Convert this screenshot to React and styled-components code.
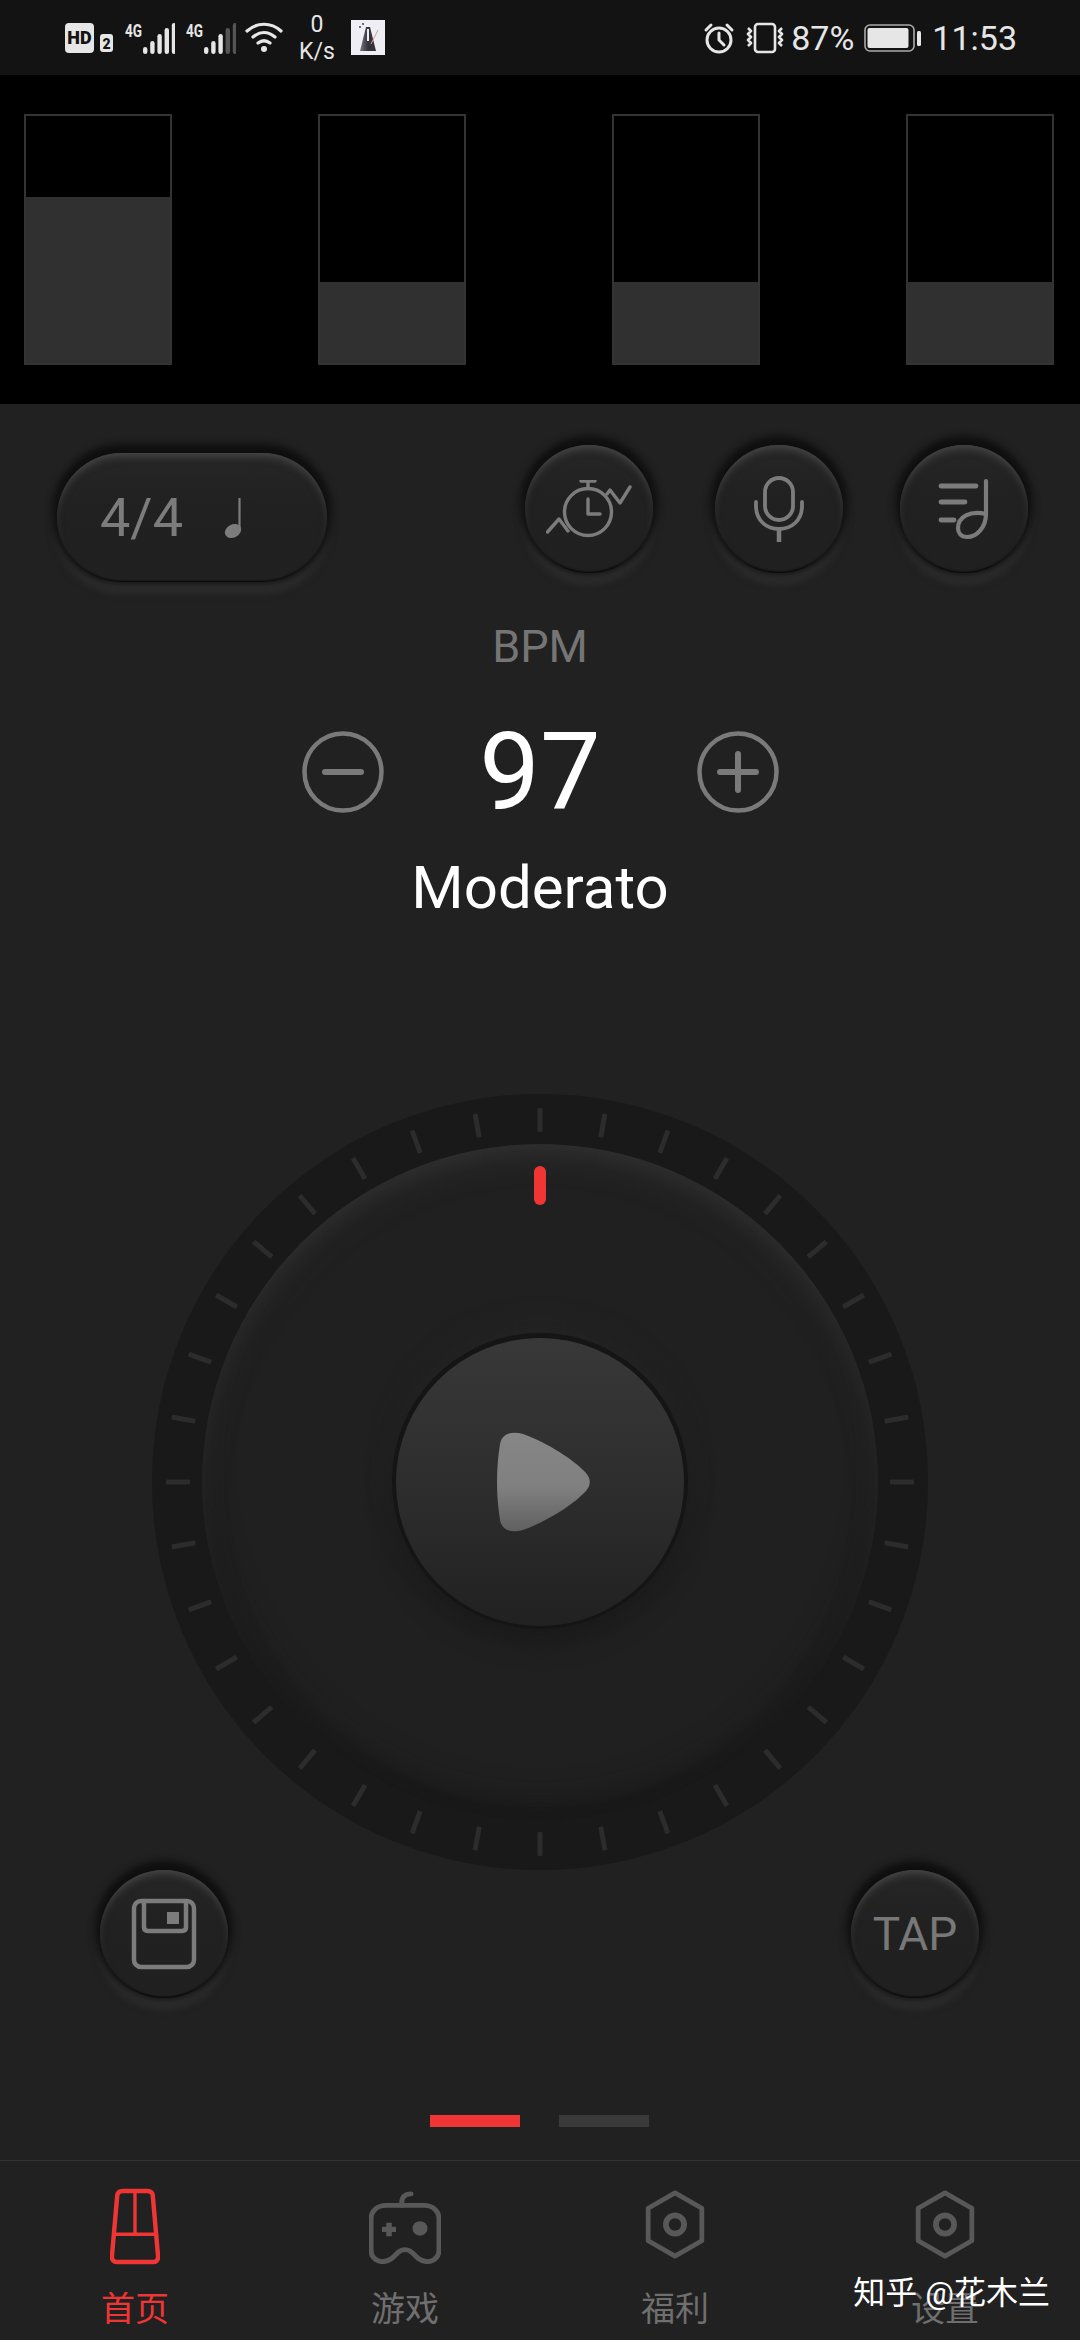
import React from 'react'
import styled, { createGlobalStyle } from 'styled-components'

const RED = '#f03535'

const GlobalStyle = createGlobalStyle`
  html, body { margin: 0; padding: 0; background: #212121; }
  body { font-family: Roboto, "Noto Sans CJK SC", sans-serif; }
`

const Screen = styled.div`
  position: relative;
  width: 1080px;
  height: 2340px;
  overflow: hidden;
  background: #212121;
  display: flex;
  flex-direction: column;
`

const StatusBar = styled.div`
  height: 75px;
  flex: none;
  background: #131313;
  color: #e6e6e6;
  display: flex;
  align-items: center;
  justify-content: space-between;
  padding: 0 63px 0 65px;
`

const StatusGroup = styled.div`
  display: flex;
  align-items: center;
  gap: ${p => p.$gap || 0}px;
  margin-left: ${p => p.$left || 0}px;
`

const StatusText = styled.span`
  font-size: 34px;
  margin-left: ${p => p.$left || 0}px;
`

const NetSpeed = styled.div`
  width: 40px;
  margin: 0 14px;
  text-align: center;
  font-size: 23px;
  line-height: 27px;
`

const BeatPanel = styled.div`
  height: 329px;
  flex: none;
  background: #000;
  display: flex;
  justify-content: space-between;
  padding: 39px 26px 39px 24px;
  box-sizing: border-box;
`

const BeatBox = styled.div`
  width: 148px;
  box-sizing: border-box;
  border: 2px solid #333;
  display: flex;
  flex-direction: column;
  justify-content: flex-end;
`

const BeatFill = styled.div`
  height: ${p => p.$h}px;
  background: #303030;
`

const ControlRow = styled.div`
  display: flex;
  align-items: flex-start;
  justify-content: space-between;
  padding: 41px 52px 0 57px;
`

const raised = `
  background: linear-gradient(#262626, #212121 40%, #202020);
  box-shadow:
    inset 0 6px 8px -3px #4a4a4a,
    inset 0 -2px 2px -1px #050505,
    0 -4px 7px 5px #0f0f0f,
    0 8px 7px 3px #2e2e2e;
`

const MeterPill = styled.div`
  width: 270px;
  height: 129px;
  margin-top: 8px;
  border-radius: 65px;
  ${raised}
  color: #7c7c7c;
  display: flex;
  align-items: center;
  padding-left: 43px;
  box-sizing: border-box;
  font-size: 54px;
`

const NoteGlyph = styled.svg`
  width: 20px;
  height: 42px;
  margin-left: 41px;
  flex: none;
`

const ToolGroup = styled.div`
  display: flex;
  gap: 57px;
`

const RoundButton = styled.div`
  width: 128px;
  height: 128px;
  margin-right: ${p => p.$right || 0}px;
  border-radius: 50%;
  ${raised}
  display: flex;
  align-items: center;
  justify-content: center;
  color: #7c7c7c;
`

const BpmLabel = styled.div`
  margin-top: 38px;
  text-align: center;
  font-size: 45px;
  line-height: 54px;
  color: #757575;
`

const TempoRow = styled.div`
  margin-top: 52px;
  display: flex;
  align-items: center;
  justify-content: center;
  gap: 93px;
  height: 92px;
`

const StepButton = styled.svg`
  width: 82px;
  height: 82px;
  flex: none;
`

const TempoValue = styled.div`
  width: 127px;
  text-align: center;
  font-size: 108px;
  line-height: 92px;
  color: #fff;
`

const TempoName = styled.div`
  margin-top: 34px;
  text-align: center;
  font-size: 60px;
  line-height: 72px;
  color: #fff;
`

const DialArea = styled.div`
  margin-top: 170px;
  display: flex;
  justify-content: center;
`

const DialRing = styled.div`
  position: relative;
  width: 776px;
  height: 776px;
  border-radius: 50%;
  background: #191919;
  display: flex;
  align-items: center;
  justify-content: center;
`

const TickRing = styled.svg`
  position: absolute;
  left: 0;
  top: 0;
  width: 776px;
  height: 776px;
`

const Knob = styled.div`
  position: relative;
  width: 676px;
  height: 676px;
  border-radius: 50%;
  background: #202020;
  box-shadow:
    inset 0 16px 30px -8px #343434,
    inset 0 -16px 36px -8px #131313;
  display: flex;
  align-items: center;
  justify-content: center;
`

const Marker = styled.div`
  position: absolute;
  left: 332px;
  top: 22px;
  width: 12px;
  height: 39px;
  border-radius: 6px;
  background: ${RED};
`

const PlayButton = styled.div`
  width: 288px;
  height: 288px;
  border-radius: 50%;
  background: linear-gradient(#383838, #2e2e2e 50%, #212121);
  box-shadow:
    0 -1px 0 4px #151515,
    0 14px 24px 2px #1a1a1a,
    0 -12px 24px 2px #252525;
  display: flex;
  align-items: center;
  justify-content: center;
`

const PlayIcon = styled.svg`
  width: 94px;
  height: 100px;
  margin-left: 5px;
`

const CornerRow = styled.div`
  display: flex;
  justify-content: space-between;
  padding: 0 101px 0 100px;
`

const TapLabel = styled.span`
  font-size: 46px;
  color: #787878;
`

const Pager = styled.div`
  margin-top: 117px;
  display: flex;
  justify-content: center;
  gap: 39px;
  padding-right: 1px;
`

const PagerBar = styled.div`
  width: 90px;
  height: 12px;
  background: ${p => (p.$active ? RED : '#3a3a3a')};
`

const TabBar = styled.div`
  margin-top: 33px;
  border-top: 1px solid #333;
  display: grid;
  grid-template-columns: repeat(4, 1fr);
`

const Tab = styled.div`
  display: flex;
  flex-direction: column;
  align-items: center;
  padding-top: ${p => p.$top}px;
  color: ${p => (p.$active ? RED : '#585858')};
`

const TabLabel = styled.div`
  margin-top: ${p => p.$gap}px;
  font-size: 34px;
  line-height: 44px;
  color: ${p => (p.$active ? RED : '#6f6f6f')};
`

const Watermark = styled.div`
  position: absolute;
  right: 30px;
  bottom: 25px;
  color: #fff;
  font-size: 32px;
  line-height: 44px;
  white-space: nowrap;
`

function SignalIcon({ dim }) {
  const bars = [7, 13, 20, 26, 31]
  return (
    <svg width="50" height="40" viewBox="0 0 50 40">
      <text x="0" y="19" fontSize="19" fontWeight="700" fontFamily="Roboto" fill="#e6e6e6" textLength="17" lengthAdjust="spacingAndGlyphs">4G</text>
      {bars.map((h, i) => (
        <rect key={h} x={18 + i * 7.2} y={36 - h} width="4.400" height={h} rx="2.200" fill={dim && i > 2 ? '#555' : '#e6e6e6'} />
      ))}
    </svg>
  )
}

function AlarmIcon() {
  return (
    <svg width="32" height="32" viewBox="0 0 32 32" fill="none" stroke="#e6e6e6" strokeWidth="3" strokeLinecap="round">
      <circle cx="16" cy="18" r="12" />
      <path d="M16 11v7l5 5M3 8l5-5M29 8l-5-5" />
    </svg>
  )
}

function VibrateIcon() {
  return (
    <svg width="42" height="32" viewBox="0 0 42 32" fill="none" stroke="#e6e6e6" strokeWidth="2.600" strokeLinejoin="round">
      <rect x="11" y="2" width="20" height="28" rx="3" />
      <path d="M4 6l3 3-3 3 3 3-3 3 3 3-3 3M38 6l-3 3 3 3-3 3 3 3-3 3 3 3" />
    </svg>
  )
}

function BatteryIcon() {
  return (
    <svg width="58" height="28" viewBox="0 0 58 28">
      <rect x="1" y="1" width="49" height="26" rx="5" fill="none" stroke="#aaa" strokeWidth="1.600" />
      <rect x="3.500" y="4" width="41" height="20" rx="2" fill="#e6e6e6" />
      <rect x="53" y="7" width="4" height="15" rx="1.500" fill="#e6e6e6" />
    </svg>
  )
}

function Ticks() {
  const list = Array.from({ length: 36 }, (_, i) => i * 10)
  return (
    <TickRing viewBox="0 0 776 776">
      {list.map(a => (
        <rect key={a} x="385.500" y="14" width="5" height="24" rx="1" fill="#2c2c2c" transform={`rotate(${a} 388 388)`} />
      ))}
    </TickRing>
  )
}

function MetronomeTab() {
  return (
    <svg width="50" height="77" viewBox="0 0 52 80" fill="none" stroke="currentColor" strokeWidth="4.600" strokeLinejoin="round">
      <path d="M13 3h26q5 0 5.500 5l5.500 63q0 6-5 6H7q-5 0-5-6L7.500 8Q8 3 13 3z" />
      <path d="M5 48h42M26 3v45" strokeWidth="3.500" />
    </svg>
  )
}

function GameTab() {
  return (
    <svg width="72" height="73" viewBox="0 0 72 76" preserveAspectRatio="none" fill="none" stroke="currentColor" strokeWidth="5" strokeLinecap="round" strokeLinejoin="round">
      <path d="M33 15c-1-8 2-12 9-12" />
      <path d="M17 15h38c9 0 15 6 15 14v32c0 12-12 16-21 9l-6-6c-4-4-10-4-14 0l-6 6c-9 7-21 3-21-9V29c0-8 6-14 15-14z" />
      <path d="M13 40h14M20 33v14" strokeWidth="5.500" strokeLinecap="butt" />
      <circle cx="51" cy="39" r="7.500" fill="currentColor" stroke="none" />
    </svg>
  )
}

function HexTab() {
  return (
    <svg width="60" height="69" viewBox="0 0 62 72" fill="none" stroke="currentColor" strokeWidth="5">
      <path d="M31 3l28 16v34L31 69 3 53V19z" strokeLinejoin="round" />
      <circle cx="31" cy="36" r="9.500" strokeWidth="6" />
    </svg>
  )
}

export default function App() {
  return (
    <Screen>
      <GlobalStyle />
      <StatusBar>
        <StatusGroup>
          <svg width="50" height="32" viewBox="0 0 50 32">
            <rect x="0" y="1" width="29" height="30" rx="4" fill="#e6e6e6" />
            <text x="14.500" y="22" textAnchor="middle" fontSize="18" fontWeight="900" fontFamily="Roboto" fill="#131313">HD</text>
            <rect x="35" y="12" width="13" height="18" rx="3" fill="#e6e6e6" />
            <text x="41.500" y="27" textAnchor="middle" fontSize="14" fontWeight="900" fontFamily="Roboto" fill="#131313">2</text>
          </svg>
          <StatusGroup $gap={11} $left={10}>
            <SignalIcon />
            <SignalIcon dim />
          </StatusGroup>
          <StatusGroup $left={9}>
            <svg width="38" height="32" viewBox="0 0 38 32" fill="none" stroke="#e6e6e6" strokeWidth="3.200" strokeLinecap="round">
              <path d="M2 9c10-9 24-9 34 0M8 15c7-6 15-6 22 0M13 21c4-3 8-3 12 0" />
              <circle cx="19" cy="27" r="3" fill="#e6e6e6" stroke="none" />
            </svg>
          </StatusGroup>
          <NetSpeed>0<br />K/s</NetSpeed>
          <svg width="34" height="35" viewBox="0 0 34 35">
            <defs>
              <linearGradient id="appIcon" x1="0" y1="0" x2="1" y2="0">
                <stop offset="0" stopColor="#77777f" />
                <stop offset="0.5" stopColor="#33333b" />
              </linearGradient>
            </defs>
            <rect width="34" height="35" fill="#eeeef4" />
            <path d="M15 7h4l6 24H9z" fill="url(#appIcon)" />
            <path d="M17 9v12" stroke="#eeeef4" strokeWidth="2" />
            <path d="M20 24l7-14" stroke="#d9a08a" strokeWidth="1" />
            <circle cx="9" cy="7" r="1" fill="#444" />
            <circle cx="12" cy="4" r="1" fill="#444" />
          </svg>
        </StatusGroup>
        <StatusGroup>
          <AlarmIcon />
          <StatusGroup $left={9}><VibrateIcon /></StatusGroup>
          <StatusText $left={5}>87%</StatusText>
          <StatusGroup $left={10}><BatteryIcon /></StatusGroup>
          <StatusText $left={10}>11:53</StatusText>
        </StatusGroup>
      </StatusBar>

      <BeatPanel>
        <BeatBox><BeatFill $h={166} /></BeatBox>
        <BeatBox><BeatFill $h={81} /></BeatBox>
        <BeatBox><BeatFill $h={81} /></BeatBox>
        <BeatBox><BeatFill $h={81} /></BeatBox>
      </BeatPanel>

      <ControlRow>
        <MeterPill>
          4/4
          <NoteGlyph viewBox="0 0 20 42">
            <ellipse cx="9" cy="34" rx="8.500" ry="6.500" transform="rotate(-28 9 34)" fill="currentColor" />
            <path d="M15.500 34V1" stroke="currentColor" strokeWidth="2.200" />
          </NoteGlyph>
        </MeterPill>
        <ToolGroup>
          <RoundButton $right={5}>
            <svg width="86" height="58" viewBox="0 0 86 58" fill="none" stroke="currentColor" strokeWidth="3.400" strokeLinecap="round" strokeLinejoin="round">
              <circle cx="42" cy="32" r="23.500" />
              <path d="M42 8.500V1M35 1h14M42 19v15h12" />
              <path d="M1.500 52L13 39l9 12" />
              <path d="M61 14l3-4 10 13 10-16" />
            </svg>
          </RoundButton>
          <RoundButton>
            <svg width="50" height="66" viewBox="0 0 50 66" fill="none" stroke="currentColor" strokeWidth="3.800">
              <rect x="11" y="2" width="28" height="42" rx="14" />
              <path d="M2 26v4c0 14 10 23 23 23s23-9 23-23v-4" strokeLinecap="round" />
              <path d="M25 53v13" strokeWidth="4.500" />
            </svg>
          </RoundButton>
          <RoundButton>
            <svg width="52" height="62" viewBox="0 0 52 62" fill="none" stroke="currentColor" strokeWidth="4.800" strokeLinecap="round">
              <path d="M3 8h35M3 24h24M3 42h13" />
              <path d="M48 3v33c0 13-9 23-19 23-6 0-9-4-9-9 0-11 12-18 28-14" strokeWidth="4.200" strokeLinejoin="round" />
            </svg>
          </RoundButton>
        </ToolGroup>
      </ControlRow>

      <BpmLabel>BPM</BpmLabel>
      <TempoRow>
        <StepButton viewBox="0 0 82 82" fill="none" stroke="#7a7a7a" strokeWidth="4.500">
          <circle cx="41" cy="41" r="38.500" />
          <path d="M23 41h36" strokeWidth="6" strokeLinecap="round" />
        </StepButton>
        <TempoValue>97</TempoValue>
        <StepButton viewBox="0 0 82 82" fill="none" stroke="#7a7a7a" strokeWidth="4.500">
          <circle cx="41" cy="41" r="38.500" />
          <path d="M23 41h36M41 23v36" strokeWidth="6" strokeLinecap="round" />
        </StepButton>
      </TempoRow>
      <TempoName>Moderato</TempoName>

      <DialArea>
        <DialRing>
          <Ticks />
          <Knob>
            <Marker />
            <PlayButton>
              <PlayIcon viewBox="0 0 94 100">
                <defs>
                  <linearGradient id="playFill" x1="0" y1="0" x2="0" y2="1">
                    <stop offset="0" stopColor="#868686" />
                    <stop offset="0.55" stopColor="#808080" />
                    <stop offset="1" stopColor="#606060" />
                  </linearGradient>
                </defs>
                <path d="M4 12C6 1 16-1 27 2 52 11 78 28 90 41c5 6 5 12 0 18C78 72 52 89 27 98 16 101 6 99 4 88 0 63 0 37 4 12z" fill="url(#playFill)" />
              </PlayIcon>
            </PlayButton>
          </Knob>
        </DialRing>
      </DialArea>

      <CornerRow>
        <RoundButton>
          <svg width="66" height="72" viewBox="0 0 66 72" fill="none" stroke="currentColor" strokeWidth="4.500" strokeLinejoin="round">
            <rect x="3" y="3" width="60" height="66" rx="7" />
            <path d="M13 3v26q0 4 4 4h34q4 0 4-4V3" />
            <rect x="36" y="14" width="12" height="12" fill="currentColor" stroke="none" />
          </svg>
        </RoundButton>
        <RoundButton><TapLabel>TAP</TapLabel></RoundButton>
      </CornerRow>

      <Pager>
        <PagerBar $active />
        <PagerBar />
      </Pager>

      <TabBar>
        <Tab $active $top={27}><MetronomeTab /><TabLabel $active $gap={22}>首页</TabLabel></Tab>
        <Tab $top={30}><GameTab /><TabLabel $gap={23}>游戏</TabLabel></Tab>
        <Tab $top={29}><HexTab /><TabLabel $gap={28}>福利</TabLabel></Tab>
        <Tab $top={29}><HexTab /><TabLabel $gap={28}>设置</TabLabel></Tab>
      </TabBar>

      <Watermark>知乎 @花木兰</Watermark>
    </Screen>
  )
}
